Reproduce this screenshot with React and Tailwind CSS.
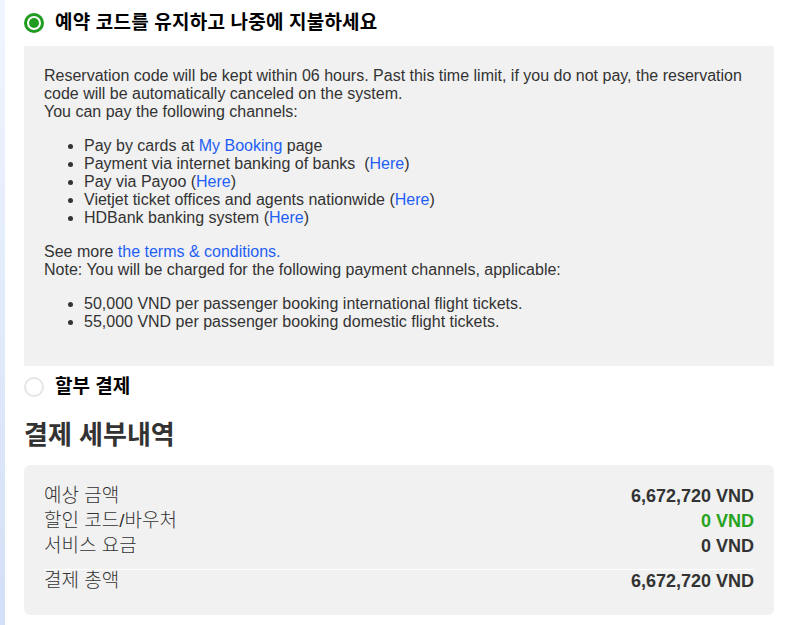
import React from 'react';

const font = { fontFamily: '"Liberation Sans", Arial, "Noto Sans CJK KR", sans-serif' };

function Radio({ checked }) {
  return checked ? (
    <span className="w-5 h-5 rounded-full border-[3px] border-[#1f9b1f] flex items-center justify-center shrink-0">
      <span className="w-2.5 h-2.5 rounded-full bg-[#1f9b1f]" />
    </span>
  ) : (
    <span className="w-5 h-5 rounded-full border-2 border-[#e6e6e6] bg-white shrink-0" />
  );
}

const A = ({ children }) => <a className="text-[#1f5ff5]">{children}</a>;

export default function App() {
  const rows = [
    ['예상 금액', '6,672,720 VND', 'text-[#333]'],
    ['할인 코드/바우처', '0 VND', 'text-[#26a31f]'],
    ['서비스 요금', '0 VND', 'text-[#333]'],
  ];

  return (
    <div className="min-h-[625px] w-[792px] bg-white flex text-[#333]" style={font}>
      <div className="w-[5px] shrink-0 bg-gradient-to-b from-[#f1f5fd] to-[#d3dff7]" />
      <div className="flex-1 pl-[19px] pr-[18px]">
        <div className="flex items-center gap-[11px] h-[46px]">
          <Radio checked />
          <span className="text-[19px] font-bold text-black tracking-[0.2px]">예약 코드를 유지하고 나중에 지불하세요</span>
        </div>

        <div className="bg-[#f1f1f1] px-5 pt-[21px] pb-[35px] text-[16px] leading-[18px]">
          <p>
            Reservation code will be kept within 06 hours. Past this time limit, if you do not pay, the reservation
            code will be automatically canceled on the system.
            <br />
            You can pay the following channels:
          </p>
          <ul className="list-disc pl-10 my-4">
            <li>Pay by cards at <A>My Booking</A> page</li>
            <li>Payment via internet banking of banks&nbsp; (<A>Here</A>)</li>
            <li>Pay via Payoo (<A>Here</A>)</li>
            <li>Vietjet ticket offices and agents nationwide (<A>Here</A>)</li>
            <li>HDBank banking system (<A>Here</A>)</li>
          </ul>
          <p>
            See more <A>the terms &amp; conditions.</A>
            <br />
            Note: You will be charged for the following payment channels, applicable:
          </p>
          <ul className="list-disc pl-10 mt-4">
            <li>50,000 VND per passenger booking international flight tickets.</li>
            <li>55,000 VND per passenger booking domestic flight tickets.</li>
          </ul>
        </div>

        <div className="flex items-center gap-[11px] h-[42px]">
          <Radio />
          <span className="text-[19px] font-bold text-black">할부 결제</span>
        </div>

        <h2 className="text-[26px] font-bold text-[#333] h-[57px] flex items-center pb-[2px]">결제 세부내역</h2>

        <div className="bg-[#f1f1f1] rounded-md px-5 pt-[19px] pb-[22px] text-[18px]">
          {rows.map(([k, v, c]) => (
            <div key={k} className="flex justify-between h-[25px] items-center">
              <span className="text-[19px] font-light">{k}</span>
              <span className={`font-bold ${c}`}>{v}</span>
            </div>
          ))}
          <div className="border-t border-white mt-[10px] flex justify-between h-[24px] items-center">
            <span className="text-[19px] font-light">결제 총액</span>
            <span className="font-bold">6,672,720 VND</span>
          </div>
        </div>
      </div>
    </div>
  );
}
